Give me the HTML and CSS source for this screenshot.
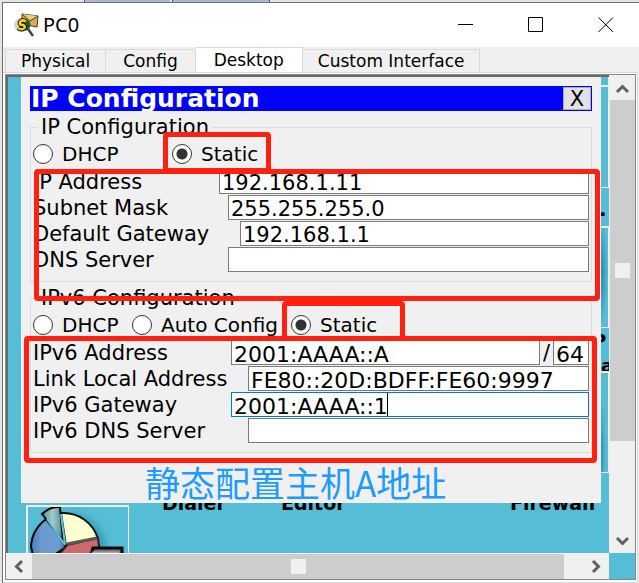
FILE: index.html
```html
<!DOCTYPE html>
<html lang="zh-CN">
<head>
<meta charset="utf-8">
<title>PC0</title>
<link rel="stylesheet" href="styles.css">
</head>
<body>
<div class="backdrop"><span class="backdrop-item"></span><span class="backdrop-item"></span></div>
<main class="window">
  <header class="titlebar">
    <svg class="app-icon" width="26" height="26" viewBox="0 0 26 26" aria-hidden="true">
      <path d="M8 2 L24 4 L23 15 L8 12Z" fill="#d9ad57" stroke="#4a3a1c"/>
      <path d="M8 2 L16 9 L24 4" fill="#e9ca83" stroke="#4a3a1c"/>
      <path d="M14 17 L19 24" stroke="#444" stroke-width="2.5"/>
      <circle cx="7" cy="13" r="7" fill="#d4d4d4"/>
      <circle cx="11" cy="13" r="5.500" fill="#28571f"/>
      <path d="M12 9.500 Q8 7 6 10 Q5 13 9 13 Q12 14 10 16.500 Q7 18 4 16" fill="none" stroke="#1c1a08" stroke-width="4.500"/>
      <path d="M12 9.500 Q8 7 6 10 Q5 13 9 13 Q12 14 10 16.500 Q7 18 4 16" fill="none" stroke="#f4cf24" stroke-width="2.500"/>
    </svg>
    <h1 class="window-title">PC0</h1>
    <div class="window-buttons">
      <button class="window-button" type="button" aria-label="Minimize"><svg width="16" height="16"><path d="M0 7.500H15" stroke="#000"/></svg></button>
      <button class="window-button" type="button" aria-label="Maximize"><svg width="16" height="16"><path d="M.5 .5H14.500V14.500H.5Z" fill="none" stroke="#000"/></svg></button>
      <button class="window-button" type="button" aria-label="Close"><svg width="16" height="16"><path d="M.5 .5L15 15M15 .5L.5 15" stroke="#000"/></svg></button>
    </div>
  </header>
  <nav class="tabs">
    <button class="tab tab-first" type="button">Physical</button>
    <button class="tab tab-config" type="button">Config</button>
    <button class="tab tab-active" type="button">Desktop</button>
    <button class="tab" type="button">Custom Interface</button>
  </nav>
  <div class="pane">
    <div class="frame">
      <div class="desktop">
        <div class="desktop-top">
          <section class="dialog">
            <div class="dialog-bar">
              <h2 class="dialog-title">IP Configuration</h2>
              <button class="dialog-close" type="button">X</button>
            </div>
            <fieldset class="group">
              <legend>IP Configuration</legend>
              <div class="modes">
                <label class="mode mode-dhcp4"><input type="radio" name="v4">DHCP</label>
                <label class="mode"><input type="radio" name="v4" checked>Static</label>
              </div>
              <div class="row"><label class="name name-ip" for="ip">IP Address</label><input id="ip" type="text" value="192.168.1.11"></div>
              <div class="row"><label class="name name-mask" for="mask">Subnet Mask</label><input id="mask" type="text" value="255.255.255.0"></div>
              <div class="row"><label class="name name-gateway" for="gateway">Default Gateway</label><input id="gateway" type="text" value="192.168.1.1"></div>
              <div class="row"><label class="name name-mask" for="dns">DNS Server</label><input id="dns" type="text"></div>
            </fieldset>
            <fieldset class="group group-v6">
              <legend>IPv6 Configuration</legend>
              <div class="modes">
                <label class="mode mode-dhcp6"><input type="radio" name="v6">DHCP</label>
                <label class="mode mode-auto"><input type="radio" name="v6">Auto Config</label>
                <label class="mode"><input type="radio" name="v6" checked>Static</label>
              </div>
              <div class="row"><label class="name name-ip6" for="ip6">IPv6 Address</label><input id="ip6" type="text" value="2001:AAAA::A"><label class="slash" for="prefix">/</label><input class="prefix" id="prefix" type="text" value="64"></div>
              <div class="row"><label class="name name-link" for="link">Link Local Address</label><input id="link" type="text" value="FE80::20D:BDFF:FE60:9997"></div>
              <div class="row"><label class="name name-ip6" for="gateway6">IPv6 Gateway</label><span class="active-field"><input id="gateway6" type="text" value="2001:AAAA::1"><span class="caret"></span></span></div>
              <div class="row"><label class="name name-link" for="dns6">IPv6 DNS Server</label><input id="dns6" type="text"></div>
            </fieldset>
            <p class="caption">静态配置主机A地址</p>
            <span class="mark mark-static4"></span>
            <span class="mark mark-fields4"></span>
            <span class="mark mark-static6"></span>
            <span class="mark mark-fields6"></span>
          </section>
          <div class="tiles">
            <span class="tile tile-a"></span>
            <span class="tile tile-b"></span>
            <span class="tile-name">.</span>
            <span class="tile tile-c"></span>
            <span class="tile-text">P<br>a</span>
            <span class="tile tile-d"></span>
          </div>
        </div>
        <div class="launchers">
          <div class="launcher">
            <svg width="101" height="60" viewBox="0 0 101 60" aria-hidden="true">
              <defs>
                <linearGradient id="blue"><stop offset="0" stop-color="#477db6"/><stop offset=".3" stop-color="#6b9bd0"/><stop offset=".8" stop-color="#6b9bd0"/><stop offset="1" stop-color="#3768a0"/></linearGradient>
                <linearGradient id="cone"><stop offset="0" stop-color="#4f8e92"/><stop offset=".5" stop-color="#a5cccb"/><stop offset="1" stop-color="#4f8e92"/></linearGradient>
                <filter id="soft"><feGaussianBlur stdDeviation="3"/></filter>
              </defs>
              <ellipse cx="42" cy="42" rx="36" ry="36" fill="#2889a8" opacity=".6" filter="url(#soft)"/>
              <path d="M38 40 L20 11 A35 35 0 0 0 3 40 L8 60Z" fill="url(#blue)" stroke="#000" stroke-width="2"/>
              <path d="M38 39 L33 6 A36 36 0 0 1 70 32Z" fill="#ffffcf" stroke="#111" stroke-width="2"/>
              <path d="M39 38 L70 31 L72 47 L32 60 L24 56Z" fill="#cf676c" stroke="#222" stroke-width="2"/>
              <path d="M39 37 L69 31" stroke="#59594c" stroke-width="3"/>
              <path d="M35 34 L14 7 Q23 -1 32 0Z" fill="url(#cone)" stroke="#000" stroke-width="2"/>
              <path d="M37 37 L33 7 M37 38 L19 12" stroke="#62c7d5" stroke-width="2" fill="none"/>
              <path d="M60 60 L65 41 H94 V60Z" fill="#777" stroke="#080808" stroke-width="3"/>
              <path d="M64 46H91" stroke="#aaa" stroke-width="3"/>
            </svg>
          </div>
          <span class="launcher-name name-dialer">Dialer</span>
          <span class="launcher-name name-editor">Editor</span>
          <span class="launcher-name name-firewall">Firewall</span>
        </div>
      </div>
      <div class="vbar">
        <svg class="arrow-v" width="25" height="25"><path d="M7 17 L12.500 11.500 L18 17" /></svg>
        <div class="thumb thumb-v"><span class="grip"></span></div>
        <svg class="arrow-v arrow-down" width="25" height="25"><path d="M7 10 L12.500 15.500 L18 10" /></svg>
      </div>
      <div class="hbar">
        <svg class="arrow-h" width="26" height="25"><path d="M16 7 L10.500 12.500 L16 18" /></svg>
        <div class="thumb thumb-h"><span class="grip"></span></div>
        <svg class="arrow-h arrow-right" width="26" height="25"><path d="M10 7 L15.500 12.500 L10 18" /></svg>
      </div>
      <div class="corner"></div>
    </div>
  </div>
</main>
</body>
</html>
```
FILE: styles.css
```css
* { box-sizing: border-box; }
body {
  margin: 0;
  height: 100vh;
  display: flex;
  flex-direction: column;
  overflow: hidden;
  background: #e5e5e5;
  color: #000;
  font-family: "DejaVu Sans", Verdana, sans-serif;
}
button, input { font-family: inherit; color: inherit; }
svg { display: block; flex: none; }

.backdrop { height: 2px; padding-left: 84px; display: flex; gap: 2px; }
.backdrop-item { width: 86px; background: #a9b8dd; border-left: 1px solid #555; }
.backdrop-item + .backdrop-item { width: 98px; border-right: 1px solid #555; }

.window {
  flex: 1;
  min-height: 0;
  margin-left: 2px;
  display: flex;
  flex-direction: column;
  background: #f0f0f0;
  border: solid #707070;
  border-width: 1px 0 0 1px;
}
.titlebar { height: 44px; padding: 0 6px 0 11px; display: flex; align-items: center; background: #fff; }
.window-title {
  margin: 0 0 0 3px;
  font: 20px/28px "Noto Sans", "Open Sans", sans-serif;
}
.window-buttons { margin-left: auto; display: flex; }
.window-button {
  width: 70px;
  height: 42px;
  padding: 0;
  display: flex;
  align-items: center;
  justify-content: center;
  background: none;
  border: 0;
}
.window-button:last-child { width: 58px; margin-left: 6px; margin-right: -2px; }

.tabs { height: 25px; padding-left: 2px; display: flex; align-items: flex-end; }
.tab {
  height: 23px;
  padding: 0 15px;
  background: #f0f0f0;
  border: solid #d9d9d9;
  border-width: 1px 1px 0 0;
  font-size: 17px;
  line-height: 20px;
  white-space: nowrap;
}
.tab-first { border-left-width: 1px; }
.tab-config { padding: 0 17px; }
.tab-active { height: 25px; padding: 0 18px; background: #fff; }

.pane {
  flex: 1;
  min-height: 0;
  display: flex;
  margin-right: 1px;
  padding: 1px 1px 2px 2px;
  background: #fff;
  border: 1px solid #d9d9d9;
  border-left: 0;
}
.frame {
  flex: 1;
  min-height: 0;
  display: grid;
  grid-template-columns: minmax(0, 1fr) 26px;
  grid-template-rows: minmax(0, 1fr) 26px;
  border: 1px solid #828790;
}
.desktop {
  min-height: 0;
  overflow: hidden;
  background: #55bdd5;
  border: solid #696969;
  border-width: 2px 0 0 2px;
  padding-left: 13px;
}
.desktop-top { display: flex; }

.dialog { position: relative; flex: 1; min-width: 0; padding: 9px 9px 0; background: #f0f0f0; }
.dialog-bar { height: 25px; display: flex; padding: 1px; background: #00f; }
.dialog-title { margin: 0; flex: 1; color: #fff; font-size: 25px; line-height: 24px; height: 24px; overflow: hidden; white-space: nowrap; }
.dialog-close { width: 28px; padding: 0; background: #e1e1e1; border: 1px solid #adadad; font-size: 21px; line-height: 20px; }

.group {
  min-width: 0;
  margin: 4px 0 0;
  padding: 0 2px 8px;
  border: 1px solid #dcdcdc;
}
.group legend { margin-left: 5px; padding: 0 3px; font-size: 21px; line-height: 24px; }
.modes { height: 30px; display: flex; align-items: center; }
.mode { display: flex; align-items: center; gap: 9px; font-size: 20px; line-height: 26px; white-space: nowrap; }
.mode-dhcp4 { width: 139px; }
.mode-dhcp6 { width: 99px; }
.mode-auto { width: 159px; }
.mode input {
  appearance: none;
  flex: none;
  width: 20px;
  height: 20px;
  margin: 0;
  background: #fff;
  border: 1px solid #333;
  border-radius: 50%;
}
.mode input:checked { background: radial-gradient(circle, #333 0 5px, #fff 6px); }
.row { height: 26px; display: flex; font-size: 21px; line-height: 26px; }
.name { flex: none; white-space: nowrap; }
.name-ip { width: 186px; }
.name-mask { width: 195px; }
.name-gateway { width: 207px; }
.name-ip6 { width: 198px; }
.name-link { width: 215px; }
.row input {
  flex: 1;
  min-width: 0;
  height: 25px;
  padding: 3px 2px 0;
  background: #fff;
  border: 1px solid #7a7a7a;
  border-radius: 0;
  font-size: 21px;
}
.group-v6 .row input { font-size: 22px; }
.slash { width: 13px; text-align: center; }
.row .prefix { flex: none; width: 36px; }
.active-field { position: relative; flex: 1; display: flex; }
.row .active-field input { border-color: #0078d7; }
.caret { position: absolute; left: 156px; top: 1px; width: 1px; height: 23px; background: #000; }

.caption {
  margin: 0 0 0 115px;
  height: 50px;
  color: #1e9bff;
  font: 400 35px/58px "Noto Sans CJK SC", sans-serif;
  white-space: nowrap;
}
.mark { position: absolute; border: 5px solid #ff2012; border-radius: 4px; pointer-events: none; }
.mark-static4 { left: 142px; top: 55px; width: 108px; height: 41px; }
.mark-fields4 { left: 13px; right: 1px; top: 92px; height: 132px; }
.mark-static6 { left: 261px; top: 224px; width: 123px; height: 40px; }
.mark-fields6 { left: 3px; right: 4px; top: 259px; height: 127px; }

.tiles { width: 8px; display: flex; flex-direction: column; overflow: hidden; }
.tile { flex: none; border: solid #f0ead8; border-width: 2px 1px 1px 0; }
.tile-a { height: 9px; border-top: 0; }
.tile-b { height: 102px; border-top-width: 1px; }
.tile-name { height: 38px; padding-top: 8px; font-weight: bold; font-size: 20px; line-height: 26px; text-indent: -2px; }
.tile-c { height: 102px; background: radial-gradient(ellipse at 0 45%, #2388b8, #55bdd5 70%); }
.tile-text { height: 43px; font-weight: bold; font-size: 18px; line-height: 25px; text-indent: -8px; overflow: hidden; }
.tile-d { height: 102px; background: radial-gradient(ellipse at 0 80%, #318fb8, #55bdd5 50%); }

.launchers { display: flex; padding-left: 5px; }
.launcher { flex: none; width: 103px; height: 62px; margin-top: 2px; border: solid #f0ead8; border-width: 2px 1px 0 2px; overflow: hidden; }
.launcher-name {
  flex: none;
  height: 7px;
  display: flex;
  align-items: flex-end;
  overflow: hidden;
  font-weight: bold;
  font-size: 19px;
  line-height: 14px;
}
.name-dialer { width: 119px; margin-left: 33px; }
.name-editor { width: 229px; }
.name-firewall { width: 90px; }

.vbar { display: flex; flex-direction: column; align-items: center; background: #f0f0f0; }
.hbar { display: flex; background: #f0f0f0; border-top: 1px solid #fff; }
.arrow-v path, .arrow-h path { fill: none; stroke: #606060; stroke-width: 3; }
.thumb { display: flex; align-items: center; justify-content: center; background: #cdcdcd; }
.thumb-v { width: 25px; flex: 339 1 0; }
.vbar::after { content: ""; order: 1; flex: 87 1 0; }
.arrow-down { order: 2; }
.thumb-h { flex: 1; }
.arrow-right { margin-left: 19px; }
.grip { width: 15px; height: 15px; background: #f0f0f0; }
.corner { background: #55bdd5; }
```
